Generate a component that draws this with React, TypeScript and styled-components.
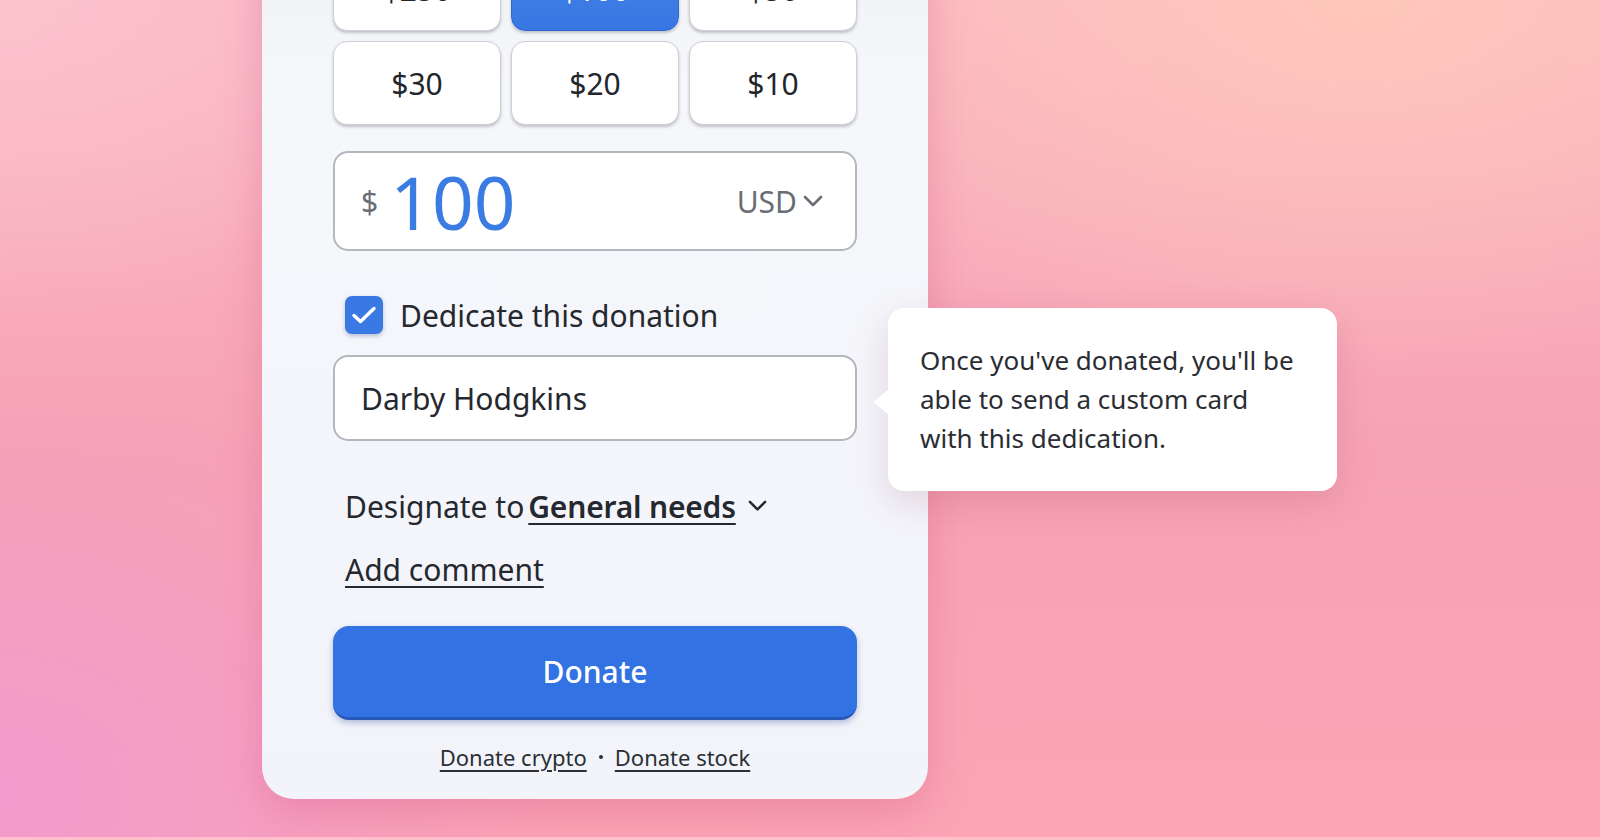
import styled, { createGlobalStyle } from "styled-components";

const GlobalStyle = createGlobalStyle`
  html, body {
    margin: 0;
    padding: 0;
  }
  body {
    font-family: "Noto Sans", "Liberation Sans", sans-serif;
    color: #25282e;
  }
`;

const Page = styled.main`
  position: relative;
  width: 100vw;
  height: 837px;
  overflow: hidden;
  display: flex;
  align-items: flex-start;
  padding-left: 262px;
  box-sizing: border-box;
  background:
    radial-gradient(ellipse 40% 45% at 85% 0%, rgba(255, 200, 186, 0.95), transparent),
    radial-gradient(ellipse 35% 50% at 0% 95%, rgba(240, 152, 208, 0.85), transparent),
    radial-gradient(ellipse 30% 40% at 0% 0%, rgba(252, 196, 206, 0.9), transparent),
    linear-gradient(180deg, #fab8c4 0%, #f7a2b4 55%, #fba5b5 100%);
`;

const Stage = styled.div`
  position: relative;
  margin-top: -93px;
`;

const Card = styled.section`
  width: 666px;
  box-sizing: border-box;
  padding: 40px 71px 27px;
  border-radius: 32px;
  background: linear-gradient(180deg, #eff0f4 0%, #f6f7fb 20%, #f2f4fa 100%);
  box-shadow: 0 14px 40px rgba(200, 70, 120, 0.28);
  display: flex;
  flex-direction: column;
`;

const AmountGrid = styled.div`
  display: grid;
  grid-template-columns: repeat(3, 1fr);
  gap: 10px;
`;

const AmountButton = styled.button<{ selected?: boolean }>`
  height: 84px;
  border-radius: 14px;
  border: 1.5px solid ${(p) => (p.selected ? "#2f68cf" : "#cdd0d6")};
  background: ${(p) =>
    p.selected ? "linear-gradient(180deg, #4584e8, #3876e2)" : "#ffffff"};
  color: ${(p) => (p.selected ? "#ffffff" : "#23262b")};
  box-shadow: 0 2px 3px rgba(60, 60, 80, 0.28);
  font-family: "Noto Sans", "Liberation Sans", sans-serif;
  font-size: 30px;
  padding: 0;
`;

const AmountField = styled.div`
  margin-top: 26px;
  height: 100px;
  box-sizing: border-box;
  border: 2px solid #b3b7be;
  border-radius: 15px;
  background: #ffffff;
  display: flex;
  align-items: center;
  padding: 0 32px 0 26px;
`;

const Currency = styled.span`
  font-size: 30px;
  color: #6a6e75;
  margin-right: 12px;
`;

const AmountValue = styled.span`
  font-size: 73px;
  color: #3a7ce2;
  line-height: 1;
  flex: 1;
`;

const CurrencySelect = styled.span`
  display: flex;
  align-items: center;
  gap: 6px;
  font-size: 30px;
  color: #6a6e75;
`;

const CheckRow = styled.label`
  margin-top: 45px;
  margin-left: 12px;
  display: flex;
  align-items: center;
  gap: 17px;
  font-size: 30px;
  height: 38px;
`;

const CheckBox = styled.span`
  width: 38px;
  height: 38px;
  border-radius: 7px;
  background: #3a78e3;
  box-shadow: 0 2px 4px rgba(40, 60, 120, 0.3);
  display: flex;
  align-items: center;
  justify-content: center;
`;

const NameField = styled.div`
  margin-top: 21px;
  height: 86px;
  box-sizing: border-box;
  border: 2px solid #b3b7be;
  border-radius: 15px;
  background: #ffffff;
  display: flex;
  align-items: center;
  padding: 0 26px;
  font-size: 30px;
`;

const DesignateRow = styled.div`
  margin-top: 45px;
  margin-left: 12px;
  height: 40px;
  display: flex;
  align-items: center;
  font-size: 30px;
  gap: 4px;
`;

const UnderlinedStrong = styled.span`
  font-weight: 600;
  letter-spacing: -0.2px;
  text-decoration: underline;
  text-decoration-thickness: 2px;
  text-underline-offset: 5px;
`;

const ChevronWrap = styled.span`
  display: flex;
  margin-left: 8px;
  flex-shrink: 0;
`;

const CommentLink = styled.a`
  margin-top: 24px;
  margin-left: 12px;
  height: 40px;
  line-height: 40px;
  font-size: 30px;
  color: inherit;
  text-decoration: underline;
  text-decoration-thickness: 2px;
  text-underline-offset: 5px;
  align-self: flex-start;
`;

const DonateButton = styled.button`
  margin-top: 36px;
  height: 94px;
  border-radius: 16px;
  border: none;
  border-bottom: 3px solid #2858b8;
  background: #3372e3;
  color: #ffffff;
  font-family: "Noto Sans", "Liberation Sans", sans-serif;
  font-size: 30px;
  font-weight: 500;
  box-shadow: 0 3px 6px rgba(30, 60, 140, 0.3);
`;

const AltLinks = styled.div`
  margin-top: 22px;
  height: 30px;
  display: flex;
  justify-content: center;
  align-items: center;
  gap: 12px;
  font-size: 22px;
`;

const SmallLink = styled.a`
  color: #2b2f36;
  text-decoration: underline;
  text-decoration-thickness: 1.5px;
  text-underline-offset: 4px;
`;

const Dot = styled.span`
  width: 4px;
  height: 4px;
  border-radius: 50%;
  background: #2b2f36;
`;

const Tooltip = styled.aside`
  position: absolute;
  left: 626px;
  top: 401px;
  width: 449px;
  box-sizing: border-box;
  padding: 33px 37px 33px 32px;
  background: #ffffff;
  border-radius: 16px;
  box-shadow: 0 12px 36px rgba(150, 60, 90, 0.18);
  font-size: 26px;
  line-height: 39px;
  color: #2a2d33;

  &::before {
    content: "";
    position: absolute;
    left: -15px;
    top: 81px;
    border-top: 13px solid transparent;
    border-bottom: 13px solid transparent;
    border-right: 16px solid #ffffff;
  }
`;

function ChevronDown({ color, size }: { color: string; size: number }) {
  return (
    <svg width={size} height={size * 0.6} viewBox="0 0 20 12" fill="none">
      <path
        d="M2 2 L10 10 L18 2"
        stroke={color}
        strokeWidth="2.6"
        strokeLinecap="round"
        strokeLinejoin="round"
      />
    </svg>
  );
}

const amounts = [
  { label: "$250" },
  { label: "$100", selected: true },
  { label: "$50" },
  { label: "$30" },
  { label: "$20" },
  { label: "$10" },
];

export default function App() {
  return (
    <>
      <GlobalStyle />
      <Page>
        <Stage>
          <Card>
            <AmountGrid>
              {amounts.map((a) => (
                <AmountButton key={a.label} selected={a.selected}>
                  {a.label}
                </AmountButton>
              ))}
            </AmountGrid>

            <AmountField>
              <Currency>$</Currency>
              <AmountValue>100</AmountValue>
              <CurrencySelect>
                USD
                <ChevronDown color="#6a6e75" size={20} />
              </CurrencySelect>
            </AmountField>

            <CheckRow>
              <CheckBox>
                <svg width="26" height="20" viewBox="0 0 26 20" fill="none">
                  <path
                    d="M3 10.5 L9.5 16.5 L23 3.5"
                    stroke="#ffffff"
                    strokeWidth="3.4"
                    strokeLinecap="round"
                    strokeLinejoin="round"
                  />
                </svg>
              </CheckBox>
              Dedicate this donation
            </CheckRow>

            <NameField>Darby Hodgkins</NameField>

            <DesignateRow>
              Designate to
              <UnderlinedStrong>General needs</UnderlinedStrong>
              <ChevronWrap>
                <ChevronDown color="#25282e" size={19} />
              </ChevronWrap>
            </DesignateRow>

            <CommentLink href="#">Add comment</CommentLink>

            <DonateButton>Donate</DonateButton>

            <AltLinks>
              <SmallLink href="#">Donate crypto</SmallLink>
              <Dot />
              <SmallLink href="#">Donate stock</SmallLink>
            </AltLinks>
          </Card>

          <Tooltip>
            Once you've donated, you'll be able to send a custom card with this
            dedication.
          </Tooltip>
        </Stage>
      </Page>
    </>
  );
}
